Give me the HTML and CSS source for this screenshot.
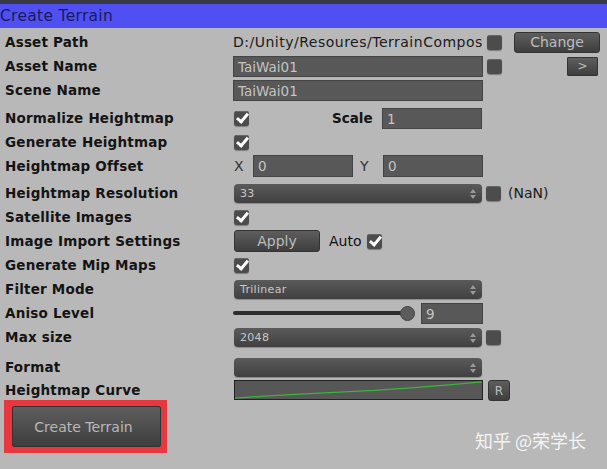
FILE: index.html
```html
<!DOCTYPE html>
<html lang="en">
<head>
    <meta charset="UTF-8">
    <title>Create Terrain</title>
    <link rel="stylesheet" href="styles.css">
</head>
<body>

<div class="topbar"></div>
<div class="title">Create Terrain</div>

<div class="panel">
    <div class="row">
        <div class="label">Asset Path</div>
        <div class="value">
            <span class="path">D:/Unity/Resoures/TerrainCompos</span>
            <span class="box box-path"></span>
            <button class="btn btn-change">Change</button>
        </div>
    </div>

    <div class="row">
        <div class="label">Asset Name</div>
        <div class="value">
            <div class="field wide">TaiWai01</div>
            <span class="box"></span>
            <button class="btn btn-small">&gt;</button>
        </div>
    </div>

    <div class="row">
        <div class="label">Scene Name</div>
        <div class="value">
            <div class="field wide">TaiWai01</div>
        </div>
    </div>

    <div class="row gap4">
        <div class="label">Normalize Heightmap</div>
        <div class="value">
            <span class="box checked"></span>
            <span class="scale-label">Scale</span>
            <div class="field short">1</div>
        </div>
    </div>

    <div class="row">
        <div class="label">Generate Heightmap</div>
        <div class="value"><span class="box checked"></span></div>
    </div>

    <div class="row">
        <div class="label">Heightmap Offset</div>
        <div class="value">
            <span class="axis">X</span>
            <div class="field short tall">0</div>
            <span class="axis axis-y">Y</span>
            <div class="field short tall">0</div>
        </div>
    </div>

    <div class="row gap3">
        <div class="label">Heightmap Resolution</div>
        <div class="value">
            <div class="dropdown">33<span class="arrows"></span></div>
            <span class="box"></span>
            <span class="nan">(NaN)</span>
        </div>
    </div>

    <div class="row">
        <div class="label">Satellite Images</div>
        <div class="value"><span class="box checked"></span></div>
    </div>

    <div class="row">
        <div class="label">Image Import Settings</div>
        <div class="value">
            <button class="btn btn-apply">Apply</button>
            <span class="auto">Auto</span>
            <span class="box checked box-auto"></span>
        </div>
    </div>

    <div class="row">
        <div class="label">Generate Mip Maps</div>
        <div class="value"><span class="box checked"></span></div>
    </div>

    <div class="row">
        <div class="label">Filter Mode</div>
        <div class="value">
            <div class="dropdown">Trilinear<span class="arrows"></span></div>
        </div>
    </div>

    <div class="row">
        <div class="label">Aniso Level</div>
        <div class="value">
            <div class="slider"><span class="thumb"></span></div>
            <div class="field num">9</div>
        </div>
    </div>

    <div class="row">
        <div class="label">Max size</div>
        <div class="value">
            <div class="dropdown">2048<span class="arrows"></span></div>
            <span class="box"></span>
        </div>
    </div>

    <div class="row gap6">
        <div class="label">Format</div>
        <div class="value">
            <div class="dropdown"><span class="arrows"></span></div>
        </div>
    </div>

    <div class="row row-curve">
        <div class="label">Heightmap Curve</div>
        <div class="value">
            <div class="curve">
                <svg viewBox="0 0 248 19" preserveAspectRatio="none">
                    <polyline points="0,18 30,16 60,14 100,12 140,10 180,7 215,4 248,1" fill="none" stroke="#3bb43b" stroke-width="1.3"/>
                </svg>
            </div>
            <button class="btn btn-r">R</button>
        </div>
    </div>

    <div class="create-wrap">
        <button class="btn btn-create">Create Terrain</button>
    </div>
</div>

<div class="watermark">知乎 @荣学长</div>

</body>
</html>
```

FILE: styles.css
```css
body {
    margin: 0;
    width: 607px;
    height: 469px;
    overflow: hidden;
    background-color: #b8b8b8;
    font-family: "DejaVu Sans", Verdana, sans-serif;
    position: relative;
}

.topbar {
    height: 4px;
    background-color: #3a3a44;
}

.title {
    height: 24px;
    line-height: 24px;
    background-color: #5050f2;
    color: #1a1a5c;
    font-size: 15.5px;
    letter-spacing: 0.3px;
}

.panel {
    padding-top: 2px;
}

.row {
    display: flex;
    align-items: center;
    height: 24px;
}

.gap3 { margin-top: 3px; }
.gap4 { margin-top: 4px; }
.gap6 { margin-top: 6px; }

.row-curve {
    height: 21px;
}

.label {
    width: 228px;
    padding-left: 5px;
    font-size: 13.5px;
    font-weight: bold;
    color: #141414;
    white-space: nowrap;
    letter-spacing: 0.2px;
}

.value {
    display: flex;
    align-items: center;
    white-space: nowrap;
}

.path {
    font-size: 14px;
    letter-spacing: 0.5px;
    color: #1a1a1a;
    width: 254px;
}

.field {
    box-sizing: border-box;
    height: 21px;
    line-height: 20px;
    padding-left: 4px;
    background-color: #585858;
    border: 1px solid #444;
    color: #c4c4c4;
    font-size: 13.5px;
}

.wide { width: 250px; }
.short { width: 100px; }
.tall { height: 22px; }
.num { width: 62px; margin-left: 9px; }

.box {
    display: inline-block;
    width: 15px;
    height: 15px;
    margin-left: 4px;
    border-radius: 3px;
    background-color: #4c4c4c;
    box-shadow: inset 0 1px 0 #666, 0 1px 1px #7a7a7a;
    position: relative;
}

.box-path { margin-left: 0; }

.checked { margin-left: 1px; }

.box-auto { margin-left: 5px; }

.checked::after {
    content: "";
    position: absolute;
    left: 5px;
    top: 0px;
    width: 4px;
    height: 9px;
    border: solid #fff;
    border-width: 0 3px 3px 0;
    transform: rotate(40deg);
}

.btn {
    font-family: "DejaVu Sans", Verdana, sans-serif;
    background: linear-gradient(#5e5e5e, #3e3e3e);
    border: 1px solid #333;
    border-radius: 3px;
    color: #bdbdbd;
    padding: 0;
}

.btn-change {
    width: 86px;
    height: 21px;
    margin-left: 12px;
    font-size: 14px;
}

.btn-small {
    width: 31px;
    height: 19px;
    margin-left: 65px;
    border-radius: 1px;
    font-size: 12px;
}

.scale-label {
    font-size: 13.5px;
    font-weight: bold;
    color: #141414;
    margin-left: 83px;
    width: 50px;
}

.axis {
    font-size: 14px;
    color: #333;
    width: 19px;
    padding-left: 1px;
}

.axis-y {
    width: 23px;
    padding-left: 7px;
}

.dropdown {
    box-sizing: border-box;
    width: 248px;
    height: 19px;
    line-height: 19px;
    margin-left: 1px;
    padding-left: 6px;
    border-radius: 4px;
    background: linear-gradient(#5a5a5a, #404040);
    box-shadow: 0 1px 1px #8a8a8a;
    color: #c8c8c8;
    font-size: 11px;
    letter-spacing: 0.3px;
    position: relative;
}

.arrows {
    position: absolute;
    right: 6px;
    top: 5px;
    width: 0;
    height: 0;
    border-left: 3px solid transparent;
    border-right: 3px solid transparent;
    border-bottom: 4px solid #999;
}

.arrows::after {
    content: "";
    position: absolute;
    left: -3px;
    top: 6px;
    border-left: 3px solid transparent;
    border-right: 3px solid transparent;
    border-top: 4px solid #999;
}

.nan {
    font-size: 14px;
    color: #1a1a1a;
    margin-left: 7px;
}

.btn-apply {
    width: 86px;
    height: 22px;
    margin-left: 1px;
    font-size: 14px;
}

.auto {
    font-size: 14px;
    color: #111;
    margin-left: 9px;
}

.slider {
    width: 179px;
    height: 4px;
    border-radius: 2px;
    background-color: #2e2e2e;
    position: relative;
}

.thumb {
    position: absolute;
    right: -3px;
    top: -5px;
    width: 13px;
    height: 13px;
    border-radius: 50%;
    background-color: #5c5c5c;
    border: 1px solid #444;
}

.curve {
    box-sizing: border-box;
    width: 249px;
    height: 20px;
    margin-left: 1px;
    background-color: #575757;
    border: 1px solid #222;
    display: flex;
}

.curve svg {
    width: 100%;
    height: 100%;
}

.btn-r {
    width: 22px;
    height: 21px;
    margin-left: 5px;
    margin-top: 2px;
    font-size: 12px;
}

.create-wrap {
    box-sizing: border-box;
    width: 163px;
    height: 53px;
    margin-left: 4px;
    padding: 6px 6px 6px 8px;
    background-color: #e8383f;
}

.btn-create {
    width: 100%;
    height: 100%;
    border-radius: 2px;
    font-size: 14px;
    color: #b8b8b8;
    padding-right: 6px;
}

.watermark {
    position: absolute;
    left: 475px;
    top: 427px;
    font-family: "Noto Sans CJK SC", sans-serif;
    font-size: 18px;
    color: #f4f4f4;
}
```
